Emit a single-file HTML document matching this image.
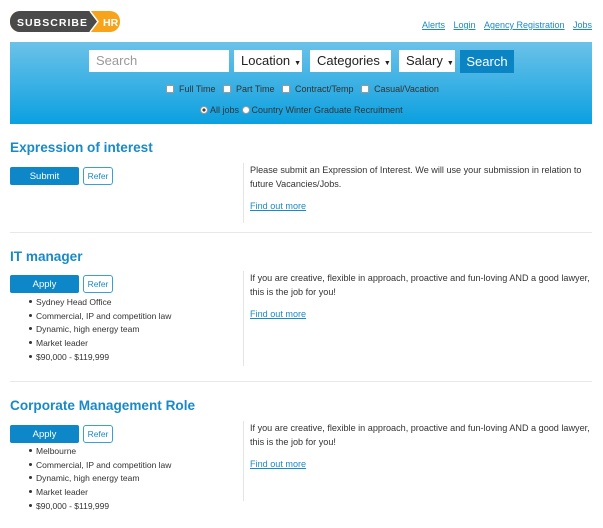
<!DOCTYPE html>
<html><head><meta charset="utf-8"><style>
*{margin:0;padding:0;box-sizing:border-box}
body{width:603px;height:528px;background:#fff;font-family:"Liberation Sans",Arial,sans-serif;position:relative;overflow:hidden;color:#333}
.a{position:absolute}
.nav a{color:#1a8ac6;font-size:9px;text-decoration:underline;margin-left:4px}
.banner{left:10px;top:42px;width:582px;height:82px;background:linear-gradient(#6cc2e8,#0ba0e0)}
.box{background:#fff;height:22px;font-size:13px;color:#222;padding:3px 7px;white-space:nowrap}
.box small{font-size:7px;margin-left:4px}
.opt{font-size:9px;color:#333;white-space:nowrap}
.cb{display:inline-block;width:8px;height:8px;background:#fff;border:1px solid #999;vertical-align:-1px;margin-right:5px}
h2{position:absolute;left:10px;font-size:13.6px;color:#1a8ac6;font-weight:bold}
.btn{position:absolute;left:10px;width:69px;height:18px;background:#0d87c7;color:#fff;font-size:9.5px;display:flex;align-items:center;justify-content:center;border-radius:2px}
.ref{position:absolute;left:83px;width:30px;height:18px;border:1px solid #3a9fd4;color:#1a8ac6;font-size:8.5px;display:flex;align-items:center;justify-content:center;border-radius:3px;background:#fff}
.vl{position:absolute;left:243px;width:1px;background:#e4e4e4}
.hr{position:absolute;left:10px;width:582px;height:1px;background:#e8e8e8}
.txt{position:absolute;left:250px;font-size:9.1px;line-height:14px;color:#333;width:346px}
.more{position:absolute;left:250px;font-size:9.1px;color:#1a8ac6;text-decoration:underline}
ul{position:absolute;left:36px;font-size:8.5px;line-height:13.7px;list-style:none}
ul li:before{content:"";display:inline-block;width:3px;height:3px;background:#333;border-radius:50%;margin-left:-7px;margin-right:4px;vertical-align:2px}
</style></head><body>
<div class="a" style="left:10px;top:11px;width:110px;height:21px">
<svg width="110" height="21"><rect x="0" y="0" width="110" height="21" rx="10" fill="#f7a31c"/><path d="M10 0H80L88 10.5L80 21H10A10 10 0 0 1 0 10.5A10 10 0 0 1 10 0Z" fill="#4a4a4a"/><path d="M80 0L88 10.5L80 21" fill="none" stroke="#fff" stroke-width="1.5"/>
<text x="7" y="15" font-family="Liberation Sans" font-weight="bold" font-size="10.5" fill="#fff" textLength="70">SUBSCRIBE</text>
<text x="93" y="15" font-family="Liberation Sans" font-weight="bold" font-size="10.5" fill="#fff">HR</text></svg></div>
<div class="a nav" style="right:11px;top:15px"><a>Alerts</a> <a>Login</a> <a>Agency Registration</a> <a>Jobs</a></div>
<div class="a banner"></div>
<div class="a box" style="left:89px;top:50px;width:140px;color:#999">Search</div>
<div class="a box" style="left:234px;top:50px;width:68px">Location<small>▼</small></div>
<div class="a box" style="left:310px;top:50px;width:81px">Categories<small>▼</small></div>
<div class="a box" style="left:399px;top:50px;width:56px">Salary<small>▼</small></div>
<div class="a" style="left:460px;top:50px;width:54px;height:23px;background:#0a84c2;color:#fff;font-size:13px;text-align:center;line-height:23px">Search</div>
<div class="a opt" style="left:166px;top:84px"><span class="cb"></span>Full Time &nbsp; <span class="cb"></span>Part Time &nbsp; <span class="cb"></span>Contract/Temp &nbsp; <span class="cb"></span>Casual/Vacation</div>
<div class="a opt" style="left:200px;top:105px"><span class="cb" style="border-radius:50%;margin-right:2px;background:radial-gradient(#444 35%,#fff 40%)"></span>All jobs <span class="cb" style="border-radius:50%;margin-right:2px"></span>Country Winter Graduate Recruitment</div>

<h2 style="top:140px">Expression of interest</h2>
<div class="btn" style="top:167px">Submit</div><div class="ref" style="top:167px">Refer</div>
<div class="vl" style="top:163px;height:60px"></div>
<div class="txt" style="top:163px">Please submit an Expression of Interest. We will use your submission in relation to future Vacancies/Jobs.</div>
<div class="more" style="top:201px">Find out more</div>
<div class="hr" style="top:232px"></div>

<h2 style="top:249px">IT manager</h2>
<div class="btn" style="top:275px">Apply</div><div class="ref" style="top:275px">Refer</div>
<div class="vl" style="top:271px;height:95px"></div>
<div class="txt" style="top:271px">If you are creative, flexible in approach, proactive and fun-loving AND a good lawyer, this is the job for you!</div>
<div class="more" style="top:309px">Find out more</div>
<ul style="top:296px"><li>Sydney Head Office</li><li>Commercial, IP and competition law</li><li>Dynamic, high energy team</li><li>Market leader</li><li>$90,000 - $119,999</li></ul>
<div class="hr" style="top:381px"></div>

<h2 style="top:398px">Corporate Management Role</h2>
<div class="btn" style="top:425px">Apply</div><div class="ref" style="top:425px">Refer</div>
<div class="vl" style="top:421px;height:80px"></div>
<div class="txt" style="top:421px">If you are creative, flexible in approach, proactive and fun-loving AND a good lawyer, this is the job for you!</div>
<div class="more" style="top:459px">Find out more</div>
<ul style="top:445px"><li>Melbourne</li><li>Commercial, IP and competition law</li><li>Dynamic, high energy team</li><li>Market leader</li><li>$90,000 - $119,999</li></ul>
</body></html>
